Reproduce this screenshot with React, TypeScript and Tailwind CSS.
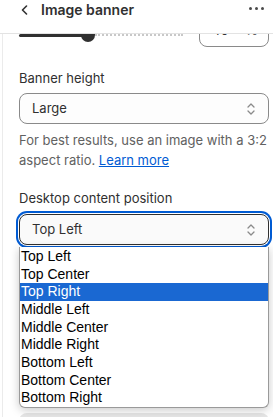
import { useState } from "react"

const positions = [
	"Top Left",
	"Top Center",
	"Top Right",
	"Middle Left",
	"Middle Center",
	"Middle Right",
	"Bottom Left",
	"Bottom Center",
	"Bottom Right",
]

function SelectArrows() {
	return (
		<svg width="10" height="14" viewBox="0 0 10 14" fill="none" className="shrink-0">
			<path d="M2 5 L5 2 L8 5" stroke="#8a8a8a" strokeWidth="1.3" strokeLinecap="round" strokeLinejoin="round" />
			<path d="M2 9 L5 12 L8 9" stroke="#8a8a8a" strokeWidth="1.3" strokeLinecap="round" strokeLinejoin="round" />
		</svg>
	)
}

export default function App() {
	const [hovered] = useState("Top Right")

	return (
		<div className="w-[273px] h-[417px] overflow-hidden bg-white flex flex-col font-['Inter',sans-serif] text-[#303030]">
			{/* header */}
			<div className="h-[34px] shrink-0 border-b border-[#e3e3e3]">
				<div className="h-[20px] flex items-center pl-[21px] pr-[9px]">
					<svg width="7" height="10" viewBox="0 0 7 10" fill="none">
						<path d="M5.5 1 L1.5 5 L5.5 9" stroke="#303030" strokeWidth="1.6" strokeLinecap="round" strokeLinejoin="round" />
					</svg>
					<span className="ml-[13px] text-[14px] font-semibold leading-[20px]">Image banner</span>
					<div className="ml-auto flex gap-[3px] -mt-[4px]">
						<span className="w-[3px] h-[3px] rounded-full bg-[#4a4a4a]" />
						<span className="w-[3px] h-[3px] rounded-full bg-[#4a4a4a]" />
						<span className="w-[3px] h-[3px] rounded-full bg-[#4a4a4a]" />
					</div>
				</div>
			</div>

			{/* scrolled content */}
			<div className="flex-1 overflow-hidden ml-[2px] border-l border-[#ebebeb] pl-4 pr-1">
				<div className="-mt-[19px] h-[32px] flex items-start">
					<div className="relative flex-1 h-full mr-4">
						<div className="absolute left-0 top-[19px] w-[68px] h-[3px] rounded-full bg-[#303030]" />
						<div className="absolute left-[76px] right-0 top-[19px] border-t-2 border-dotted border-[#c8c8c8]" />
						<div className="absolute left-[62px] top-[13px] w-[14px] h-[14px] rounded-full bg-[#303030]" />
					</div>
					<div className="w-[70px] h-[32px] rounded-[8px] border border-[#8a8a8a] flex items-center pl-[12px] pr-[10px] text-[13px]">
						<span>40</span>
						<span className="ml-auto text-[#616161]">%</span>
					</div>
				</div>

				<div className="mt-[21px] text-[13px] leading-[20px]">Banner height</div>
				<div className="mt-[5px] h-[31px] rounded-[8px] border border-[#8a8a8a] bg-[#fdfdfd] flex items-center pl-[12px] pr-[12px] text-[13px]">
					<span>Large</span>
					<span className="ml-auto">
						<SelectArrows />
					</span>
				</div>
				<p className="mt-[6px] text-[13px] leading-[20px] text-[#616161]">
					For best results, use an image with a 3:2 aspect ratio.{" "}
					<span className="text-[#005bd3] underline">Learn more</span>
				</p>

				<div className="mt-[18px] text-[13px] leading-[20px]">Desktop content position</div>
				<div className="relative mt-[6px]">
					<div className="h-[31px] rounded-[8px] border border-[#303030] bg-[#fafafa] ring-2 ring-[#005bd3] ring-offset-1 flex items-center pl-[12px] pr-[12px] text-[13px]">
						<span>Top Left</span>
						<span className="ml-auto">
							<SelectArrows />
						</span>
					</div>
					<ul className="absolute z-10 left-0 top-[33px] w-[250px] bg-white border border-t-0 border-[#9a9a9a] rounded-b-[6px] shadow-[0_2px_10px_rgba(0,0,0,0.22)] pt-px font-['Liberation_Sans',Arial,sans-serif] text-[14px] text-black overflow-hidden">
						{positions.map((p) => (
							<li
								key={p}
								className={`h-[17.67px] leading-[17.67px] pl-px ${
									p === hovered ? "bg-[#1a68d2] text-white" : ""
								}`}
							>
								{p}
							</li>
						))}
					</ul>
				</div>
				<div className="mt-[168px] h-[20px] rounded-t-[8px] bg-[#e6e6e6]" />
			</div>
		</div>
	)
}
